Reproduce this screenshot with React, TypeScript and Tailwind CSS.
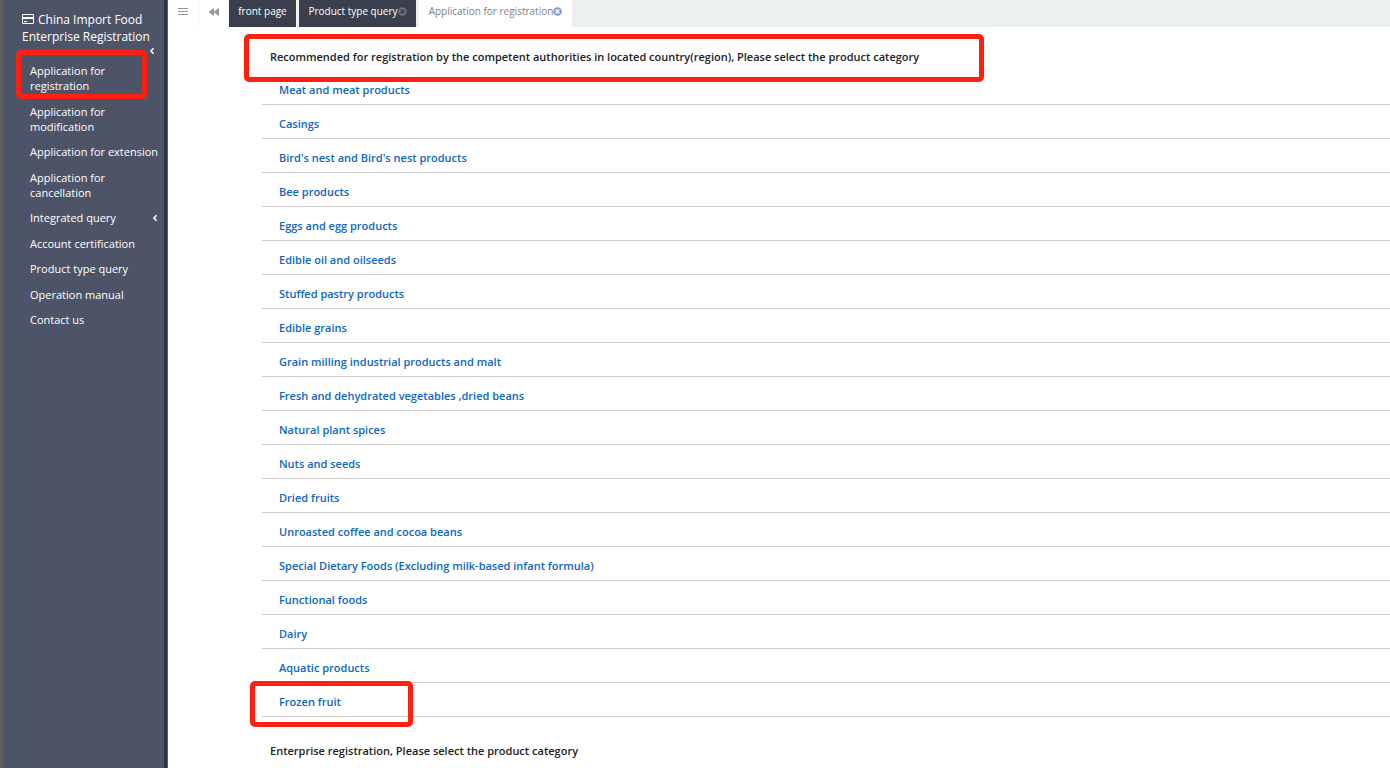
import React from 'react';
import { FaAngleLeft, FaBackward, FaTimesCircle } from 'react-icons/fa';

interface MenuItem {
  label: string;
  hasChildren?: boolean;
  highlighted?: boolean;
}

const menuItems: MenuItem[] = [
  { label: 'Application for registration', highlighted: true },
  { label: 'Application for modification' },
  { label: 'Application for extension' },
  { label: 'Application for cancellation' },
  { label: 'Integrated query', hasChildren: true },
  { label: 'Account certification' },
  { label: 'Product type query' },
  { label: 'Operation manual' },
  { label: 'Contact us' },
];

const categories = [
  'Meat and meat products',
  'Casings',
  "Bird's nest and Bird's nest products",
  'Bee products',
  'Eggs and egg products',
  'Edible oil and oilseeds',
  'Stuffed pastry products',
  'Edible grains',
  'Grain milling industrial products and malt',
  'Fresh and dehydrated vegetables ,dried beans',
  'Natural plant spices',
  'Nuts and seeds',
  'Dried fruits',
  'Unroasted coffee and cocoa beans',
  'Special Dietary Foods (Excluding milk-based infant formula)',
  'Functional foods',
  'Dairy',
  'Aquatic products',
  'Frozen fruit',
];

// Red frame drawn over the content
const Marker: React.FC<{ className: string }> = ({ className }) => (
  <span className={`pointer-events-none absolute rounded-[5px] border-5 border-[#ff1f10] ${className}`} />
);

const CardIcon = () => (
  <svg viewBox="0 0 12 10" className="mr-1 inline-block h-[10px] w-[12px] align-baseline" fill="none" stroke="currentColor">
    <rect x="0.5" y="0.5" width="11" height="9" rx="0.5" />
    <path d="M0 4h12" strokeWidth="2" />
    <path d="M2 7.5h3" />
  </svg>
);

const BarsIcon = () => (
  <svg viewBox="0 0 10 9" className="h-[9px] w-[10px]" stroke="currentColor">
    <path d="M0 1.5h10M0 4.5h10M0 7.5h10" />
  </svg>
);

const Sidebar = () => (
  <aside className="w-[168px] shrink-0 border-r border-[#5c5d70] bg-[#4e5467] text-white">
    <div className="min-h-screen border-r-3 border-l-3 border-r-[#2e3142] border-l-[#60605f]">
      <a href="#" className="relative block pt-[11px] pl-[19px] text-[12px] leading-[17px] whitespace-nowrap">
        <CardIcon />
        China Import Food
        <br />
        Enterprise Registration
        <FaAngleLeft className="absolute top-[46px] right-[8px] h-[10px] w-[8px]" />
      </a>
      <ul className="pt-[13px] text-[11px] leading-[15px]">
        {menuItems.map((item) => (
          <li key={item.label} className="relative odd:mb-px">
            <a href="#" className="flex items-center justify-between py-[5px] pr-[5px] pl-[27px]">
              <span>{item.label}</span>
              {item.hasChildren && <FaAngleLeft className="h-[10px] w-[8px]" />}
            </a>
            {item.highlighted && <Marker className="-top-[8px] right-[17px] -bottom-[1px] left-[13px]" />}
          </li>
        ))}
      </ul>
    </div>
  </aside>
);

const TabBar = () => (
  <nav className="flex h-[27px] bg-[#eef1f2] text-[10px] leading-[15px]">
    <button type="button" aria-label="Toggle menu" className="flex w-[31px] items-center justify-center border-r border-[#f4f4f4] bg-white pb-[4px] text-[#999]">
      <BarsIcon />
    </button>
    <button type="button" aria-label="Previous tabs" className="flex w-[30px] items-center justify-center border-r border-[#f4f4f4] bg-white pb-[4px] text-[#999]">
      <FaBackward className="h-[10px] w-[10px]" />
    </button>
    <button type="button" className="w-[70px] border-r-3 border-[#f2f2f2] bg-[#3a3f4d] pb-[4px] text-white">
      front page
    </button>
    <button type="button" className="flex w-[120px] items-center justify-center border-r-3 border-[#eee] bg-[#3a3f4d] pb-[4px] text-white">
      Product type query
      <FaTimesCircle className="h-[9px] w-[9px] text-[#707070]" />
    </button>
    <button type="button" className="flex w-[156px] items-center justify-center border-r-3 border-[#eee] bg-white pb-[4px] text-[#808080]">
      Application for registration
      <FaTimesCircle className="h-[9px] w-[9px] text-[#7b9fd6]" />
    </button>
  </nav>
);

export default function App() {
  return (
    <div className="flex min-h-screen bg-white font-['Open_Sans','Noto_Sans',sans-serif]">
      <Sidebar />
      <main className="min-w-0 flex-1">
        <TabBar />
        <div className="pl-[94px]">
          <h2 className="relative pt-[22px] pb-[7px] pl-[8px] text-[11px] leading-[15px] font-semibold text-[#222]">
            Recommended for registration by the competent authorities in located country(region), Please select the product category
            <Marker className="top-[7px] -left-[18px] h-[48px] w-[740px]" />
          </h2>
          <ul className="text-[11px] leading-[15px] font-semibold text-[#0c66c2]">
            {categories.map((name) => (
              <li key={name} className="relative border-b border-[#ccc] pt-[11px] pb-[7px] pl-[17px]">
                <a href="#">{name}</a>
                {name === 'Frozen fruit' && <Marker className="-top-[2px] -left-[12px] h-[46px] w-[163px]" />}
              </li>
            ))}
          </ul>
          <h2 className="pt-[26px] pl-[8px] text-[11px] leading-[15px] font-semibold text-[#222]">
            Enterprise registration, Please select the product category
          </h2>
        </div>
      </main>
    </div>
  );
}
